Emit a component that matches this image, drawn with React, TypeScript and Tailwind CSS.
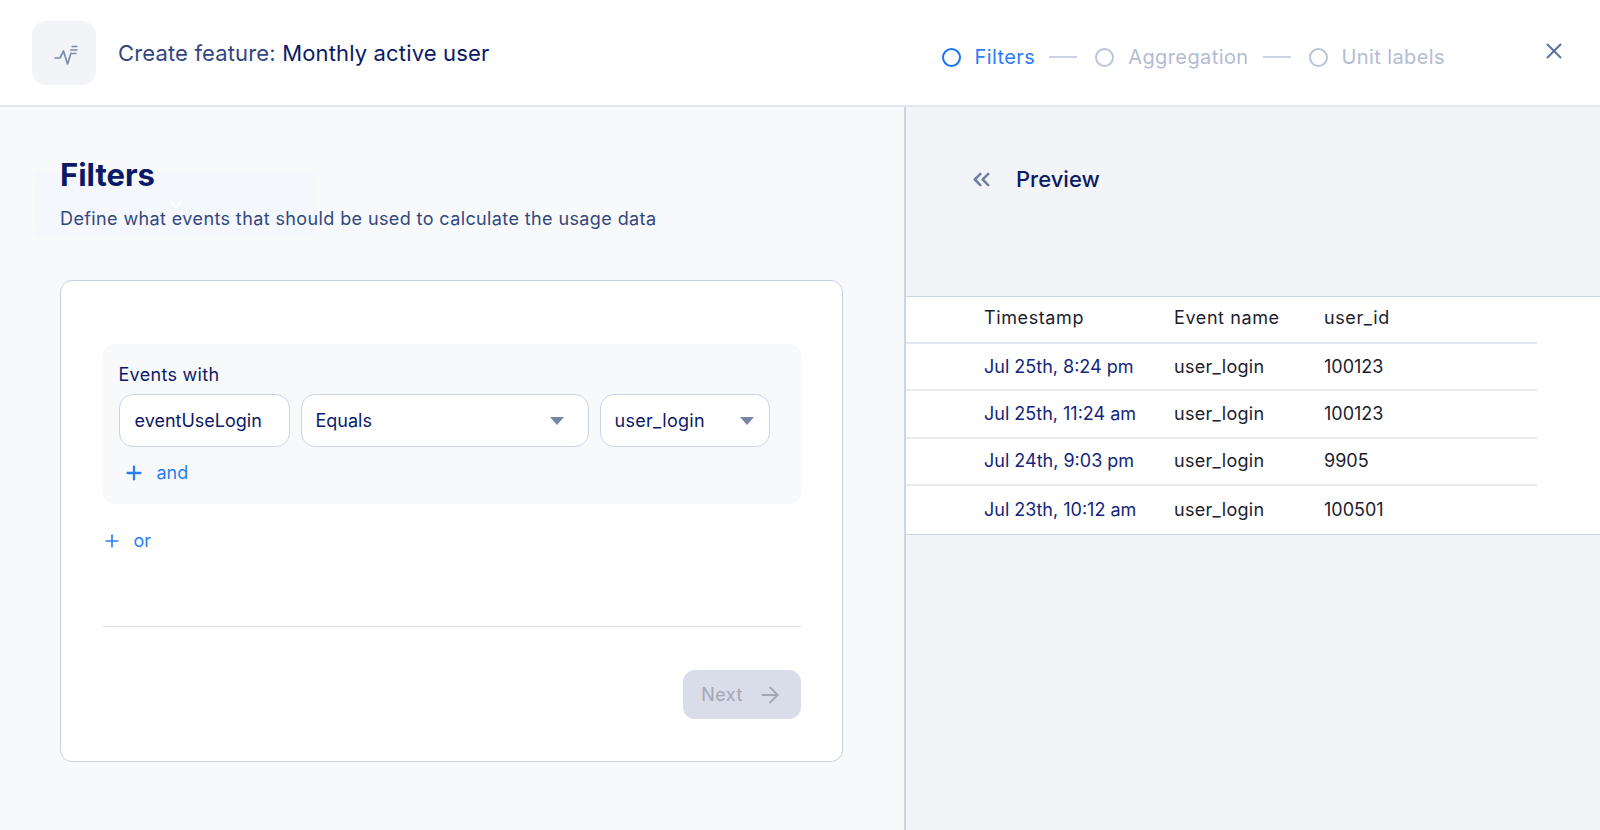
import { ArrowRight, ChevronsLeft, Plus, X } from "lucide-react";

/* ---- small bits ---- */

function PulseIcon() {
  return (
    <svg viewBox="0 0 28 24" fill="none" className="w-7 h-6" stroke="#7b8bb0" strokeWidth="1.7" strokeLinecap="round" strokeLinejoin="round">
      <path d="M2 14 H7 L10.5 7 L14.5 20 L18 9" />
      <path d="M19 2.5 H24 M17.5 6 H24 M19 9.5 H23" strokeWidth="1.3" />
    </svg>
  );
}

function Caret() {
  return (
    <svg viewBox="0 0 14 8" className="w-[14px] h-2">
      <path d="M0 0 H14 L7 8 Z" fill="#7884a6" />
    </svg>
  );
}

function Step({ label, active }: { label: string; active?: boolean }) {
  return (
    <div className="flex items-center gap-[14px]">
      <span className={`w-[19px] h-[19px] rounded-full border-2 ${active ? "border-[#1a73f0]" : "border-[#bcc4da]"}`} />
      <span className={`text-[20px] leading-none tracking-[0.4px] ${active ? "text-[#2a7df2]" : "text-[#b3bcd3]"}`}>{label}</span>
    </div>
  );
}

const rows = [
  { ts: "Jul 25th, 8:24 pm", name: "user_login", id: "100123" },
  { ts: "Jul 25th, 11:24 am", name: "user_login", id: "100123" },
  { ts: "Jul 24th, 9:03 pm", name: "user_login", id: "9905" },
  { ts: "Jul 23th, 10:12 am", name: "user_login", id: "100501" },
];

export default function App() {
  return (
    <div className="w-[1600px] h-[830px] flex flex-col overflow-hidden bg-white font-['Inter',sans-serif] text-[#0b1a66]">
      {/* Top bar */}
      <header className="h-[107px] shrink-0 flex items-start border-b-2 border-[#e2e6f1] pl-8 pr-[33px]">
        <div className="mt-[21px] w-16 h-16 rounded-[14px] bg-[#f2f4f8] flex items-center justify-center pl-[6px] pt-[6px]">
          <PulseIcon />
        </div>
        <div className="ml-[22px] mt-[41px] text-[22px] leading-6 tracking-[0.15px]">
          <span className="text-[#33477f]">Create feature: </span>
          <span>Monthly active user</span>
        </div>
        <div className="ml-auto mt-[47px] flex items-center gap-4">
          <Step label="Filters" active />
          <span className="w-7 h-0.5 -ml-[2px] mr-[2px] bg-[#ccd2e2]" />
          <Step label="Aggregation" />
          <span className="w-7 h-0.5 -ml-[2px] mr-[2px] bg-[#ccd2e2]" />
          <Step label="Unit labels" />
        </div>
        <X className="ml-[96px] mt-[38px] w-[26px] h-[26px] text-[#5f7099]" strokeWidth={1.8} />
      </header>

      <div className="flex-1 flex min-h-0">
        {/* Filters side */}
        <main className="relative w-[906px] shrink-0 bg-[#f8f9fb] border-r-2 border-[#cdd4e5] pl-[60px] pt-[48px]">
          <div className="absolute left-[35px] top-[65px] w-[281px] h-16 rounded-md bg-[#f4f7fc]">
            <svg viewBox="0 0 14 8" fill="none" className="absolute left-[134px] top-[28px] w-[14px] h-2" stroke="white" strokeWidth="1.5">
              <path d="M1 1 L7 7 L13 1" />
            </svg>
          </div>
          <div className="relative">
            <h1 className="text-[31px] leading-10 font-bold">Filters</h1>
            <p className="mt-[12px] text-[18px] leading-6 tracking-[0.39px] text-[#33477f]">Define what events that should be used to calculate the usage data</p>
          </div>

          <section className="relative mt-[49px] w-[783px] h-[482px] rounded-xl border-[1.5px] border-[#c9d0e2] bg-white pl-[41.5px] pr-[41px] pt-[63px]">
            <div className="h-40 rounded-xl bg-[#f8f9fb] px-4 pt-[19px]">
              <div className="text-[18px] leading-6 tracking-[0.3px]">Events with</div>
              <div className="mt-[7px] flex gap-[11px] text-[18px]">
                <div className="w-[171px] h-[53px] rounded-[14px] border-[1.5px] border-[#cdd3e6] bg-white flex items-center px-[15px]">eventUseLogin</div>
                <div className="w-[288px] h-[53px] rounded-[14px] border-[1.5px] border-[#cdd3e6] bg-white flex items-center justify-between pl-[14px] pr-[24px]">
                  Equals
                  <Caret />
                </div>
                <div className="w-[170px] h-[53px] rounded-[14px] border-[1.5px] border-[#cdd3e6] bg-white flex items-center justify-between pl-[14px] pr-[15px]">
                  <span className="tracking-[0.3px]">user_login</span>
                  <Caret />
                </div>
              </div>
              <div className="mt-[14px] ml-1 flex items-center gap-3 text-[#2a7df2] text-[18px] leading-6">
                <Plus className="w-[22px] h-[22px]" strokeWidth={2.5} />
                and
              </div>
            </div>

            <div className="mt-[25px] flex items-center gap-3 text-[#2a7df2] text-[18px] leading-6">
              <Plus className="w-[20px] h-[20px] -ml-px" strokeWidth={2} />
              or
            </div>

            <div className="mt-[73px] border-t border-[#d9dde8]" />

            <div className="mt-[43px] flex justify-end">
              <button className="w-[118px] h-[49px] rounded-xl bg-[#d9dde9] flex items-center justify-center gap-[14px] text-[18px] tracking-[0.5px] text-[#a3a6b5]">
                Next
                <ArrowRight className="w-[26px] h-[26px]" strokeWidth={1.8} />
              </button>
            </div>
          </section>
        </main>

        {/* Preview side */}
        <aside className="flex-1 bg-[#f2f4f8] pt-[189px] relative">
          <div className="absolute left-[62px] top-[58px] flex items-center gap-[21px]">
            <ChevronsLeft className="w-[27px] h-[27px] text-[#6f80a8]" strokeWidth={2.2} />
            <span className="text-[22px] leading-7 font-medium">Preview</span>
          </div>

          <div className="bg-white border-y-[1.5px] border-[#cdd4e5]">
            <div className="w-[631px]">
              <div className="grid grid-cols-[190px_150px_1fr] pl-[78px] h-[47px] pb-[4px] items-center border-b-2 border-[#e3e7f2] text-[18px] tracking-[0.6px] text-[#1b1d2e]">
                <span>Timestamp</span>
                <span>Event name</span>
                <span>user_id</span>
              </div>
              {rows.map((r, i) => (
                <div
                  key={i}
                  className="grid grid-cols-[190px_150px_1fr] pl-[78px] h-[47.4px] pb-px items-center border-b-2 last:border-b-0 border-[#e8eaf1] text-[18px] text-[#1b1d2e]"
                >
                  <span className="text-[#14267a]">{r.ts}</span>
                  <span className="tracking-[0.3px]">{r.name}</span>
                  <span>{r.id}</span>
                </div>
              ))}
            </div>
          </div>
        </aside>
      </div>
    </div>
  );
}
